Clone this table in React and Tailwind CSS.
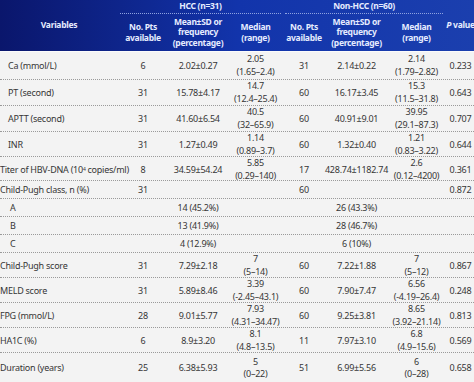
import React from "react";

const COLS = "grid grid-cols-[118px_50px_60px_55px_42px_63px_57px_31px]";
const FONT = { fontFamily: "'Noto Sans', 'Open Sans', sans-serif" };

const rows = [
  { h: "h-[28px]", pl: "pl-2", v: "Ca (mmol/L)", d: ["6", "2.02±0.27", ["2.05", "(1.65–2.4)"], "31", "2.14±0.22", ["2.14", "(1.79–2.82)"], "0.233"] },
  { h: "h-[26px]", pl: "pl-2", v: "PT (second)", d: ["31", "15.78±4.17", ["14.7", "(12.4–25.4)"], "60", "16.17±3.45", ["15.3", "(11.5–31.8)"], "0.643"] },
  { h: "h-[26px]", pl: "pl-2", v: "APTT (second)", d: ["31", "41.60±6.54", ["40.5", "(32–65.9)"], "60", "40.91±9.01", ["39.95", "(29.1–87.3)"], "0.707"] },
  { h: "h-[25px]", pl: "pl-2", v: "INR", d: ["31", "1.27±0.49", ["1.14", "(0.89–3.7)"], "60", "1.32±0.40", ["1.21", "(0.83–3.22)"], "0.644"] },
  { h: "h-[24px]", pl: "pl-0", v: <>Titer of HBV-DNA (10<sup className="text-[5px] relative -top-px mr-[2px]">4</sup>copies/ml)</>, d: ["8", "34.59±54.24", ["5.85", "(0.29–140)"], "17", "428.74±1182.74", ["2.6", "(0.12–4200)"], "0.361"] },
  { h: "h-[18px]", pl: "pl-0", v: "Child-Pugh class, n (%)", d: ["31", "", "", "60", "", "", "0.872"] },
  { h: "h-[18px]", pl: "pl-[10px]", v: "A", d: ["", "14 (45.2%)", "", "", "26 (43.3%)", "", ""] },
  { h: "h-[18px]", pl: "pl-[10px]", v: "B", d: ["", "13 (41.9%)", "", "", "28 (46.7%)", "", ""] },
  { h: "h-[18px]", pl: "pl-[10px]", v: "C", d: ["", "4 (12.9%)", "", "", "6 (10%)", "", ""] },
  { h: "h-[25px]", pl: "pl-0", v: "Child-Pugh score", d: ["31", "7.29±2.18", ["7", "(5–14)"], "60", "7.22±1.88", ["7", "(5–12)"], "0.867"] },
  { h: "h-[25px]", pl: "pl-0", v: "MELD score", d: ["31", "5.89±8.46", ["3.39", "(-2.45–43.1)"], "60", "7.90±7.47", ["6.56", "(-4.19–26.4)"], "0.248"] },
  { h: "h-[25px]", pl: "pl-0", v: "FPG (mmol/L)", d: ["28", "9.01±5.77", ["7.93", "(4.31–34.47)"], "60", "9.25±3.81", ["8.65", "(3.92–21.14)"], "0.813"] },
  { h: "h-[25px]", pl: "pl-0", v: "HA1C (%)", d: ["6", "8.9±3.20", ["8.1", "(4.8–13.5)"], "11", "7.97±3.10", ["6.8", "(4.9–15.6)"], "0.569"] },
  { h: "h-[30px]", pl: "pl-0", v: "Duration (years)", d: ["25", "6.38±5.93", ["5", "(0–22)"], "51", "6.99±5.56", ["6", "(0–28)"], "0.658"], last: true },
];

function Cell({ c }) {
  if (Array.isArray(c)) {
    return (
      <div className="flex flex-col items-center justify-center leading-[12.5px] whitespace-nowrap">
        <span>{c[0]}</span>
        <span>{c[1]}</span>
      </div>
    );
  }
  return <div className="flex items-center justify-center whitespace-nowrap">{c}</div>;
}

export default function App() {
  return (
    <div className="w-[474px] h-[382px] overflow-hidden bg-[#f3f3f3] text-[#363636]" style={FONT}>
      <div className="w-[476px]">
        <div className={`${COLS} grid-rows-[14px_37px] h-[51px] bg-gradient-to-r from-[#0a166c] via-[#1234ab] to-[#1b3fae] text-[#e6ecff] font-bold text-[8.5px] leading-[10.5px] tracking-[-0.3px]`}>
          <div className="row-span-2 flex items-center justify-center">Variables</div>
          <div className="col-span-3 mx-[2px] flex items-center justify-center border-b border-dotted border-[#8fa3e0]">HCC (n=31)</div>
          <div className="col-span-3 mx-[2px] flex items-center justify-center border-b border-dotted border-[#8fa3e0]">Non-HCC (n=60)</div>
          <div className="row-span-2 flex items-center justify-center whitespace-nowrap"><i>P</i>&nbsp;value</div>
          <div className="flex flex-col items-center justify-center whitespace-nowrap"><span>No. Pts</span><span>available</span></div>
          <div className="flex flex-col items-center justify-center whitespace-nowrap"><span>Mean±SD or</span><span>frequency</span><span>(percentage)</span></div>
          <div className="flex flex-col items-center justify-center whitespace-nowrap"><span>Median</span><span>(range)</span></div>
          <div className="flex flex-col items-center justify-center whitespace-nowrap"><span>No. Pts</span><span>available</span></div>
          <div className="flex flex-col items-center justify-center whitespace-nowrap"><span>Mean±SD or</span><span>frequency</span><span>(percentage)</span></div>
          <div className="flex flex-col items-center justify-center whitespace-nowrap"><span>Median</span><span>(range)</span></div>
        </div>
        <div className="h-px bg-[#fbfbfb]" />
        <div className="text-[9px] tracking-[-0.25px]">
          {rows.map((r, i) => (
            <div key={i} className={`${COLS} ${r.h} ${r.last ? "" : "border-b border-dotted border-[#9a9a9a]"}`}>
              <div className={`flex items-center whitespace-nowrap ${r.pl}`}>{r.v}</div>
              {r.d.map((c, j) => (
                <Cell key={j} c={c} />
              ))}
            </div>
          ))}
        </div>
      </div>
    </div>
  );
}
